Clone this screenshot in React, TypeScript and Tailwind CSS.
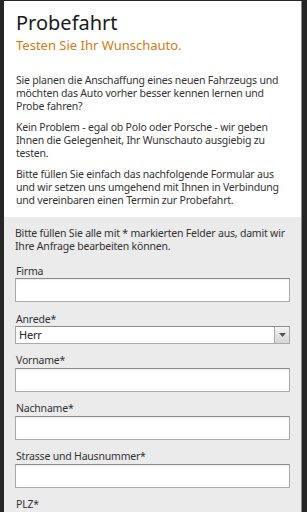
import React from "react";

const fields = ["Vorname*", "Nachname*", "Strasse und Hausnummer*", "PLZ*"];

function TextInput() {
  return (
    <div className="h-[24px] w-full bg-white border border-[#a9a9a9] border-t-[#8c8c8c] shadow-[inset_0_1px_1px_rgba(0,0,0,0.08)]" />
  );
}

export default function App() {
  return (
    <div
      className="w-[307px] h-[512px] overflow-hidden bg-[#262626] pt-px pl-[4px] pr-[5px] flex"
      style={{ fontFamily: '"Noto Sans", "Open Sans", sans-serif' }}
    >
      <div className="flex-1 bg-white flex flex-col border-r border-[#8a8a8a] overflow-hidden">
        {/* Intro */}
        <div className="px-[12px] pt-[9px] pb-[10px]">
          <h1 className="text-[20px] leading-[26px] text-[#1a1a1a]">Probefahrt</h1>
          <p className="text-[13px] leading-[17px] text-[#d27a12] mt-[1px]">
            Testen Sie Ihr Wunschauto.
          </p>
          <div className="mt-[20px] text-[10.5px] leading-[13px] tracking-[-0.2px] text-[#333] flex flex-col gap-[8px]">
            <p>
              Sie planen die Anschaffung eines neuen Fahrzeugs und möchten das Auto vorher besser
              kennen lernen und Probe fahren?
            </p>
            <p>
              Kein Problem - egal ob Polo oder Porsche - wir geben Ihnen die Gelegenheit, Ihr
              Wunschauto ausgiebig zu testen.
            </p>
            <p>
              Bitte füllen Sie einfach das nachfolgende Formular aus und wir setzen uns umgehend
              mit Ihnen in Verbindung und vereinbaren einen Termin zur Probefahrt.
            </p>
          </div>
        </div>

        {/* Form */}
        <div className="flex-1 bg-[#ebebeb] px-[11px] pt-[10px] text-[10.5px] leading-[13px] tracking-[-0.2px] text-[#333]">
          <p className="pr-[2px]">
            Bitte füllen Sie alle mit * markierten Felder aus, damit wir Ihre Anfrage bearbeiten
            können.
          </p>

          <div className="mt-[12px]">
            <label className="block pl-px">Firma</label>
            <TextInput />
          </div>

          <div className="mt-[11px]">
            <label className="block pl-px">Anrede*</label>
            <div className="h-[18px] w-full flex bg-white border border-[#a9a9a9] border-t-[#8c8c8c]">
              <span className="flex-1 pl-[3px] text-[11px] leading-[16px] text-[#222]">Herr</span>
              <div className="w-[15px] border-l border-[#a9a9a9] bg-gradient-to-b from-[#f4f4f4] to-[#d6d6d6] flex items-center justify-center">
                <svg width="7" height="4" viewBox="0 0 7 4">
                  <path d="M0 0h7L3.5 4z" fill="#555" />
                </svg>
              </div>
            </div>
          </div>

          {fields.map((f) => (
            <div key={f} className="mt-[10px]">
              <label className="block pl-px mb-[1px]">{f}</label>
              <TextInput />
            </div>
          ))}
        </div>
      </div>
    </div>
  );
}
